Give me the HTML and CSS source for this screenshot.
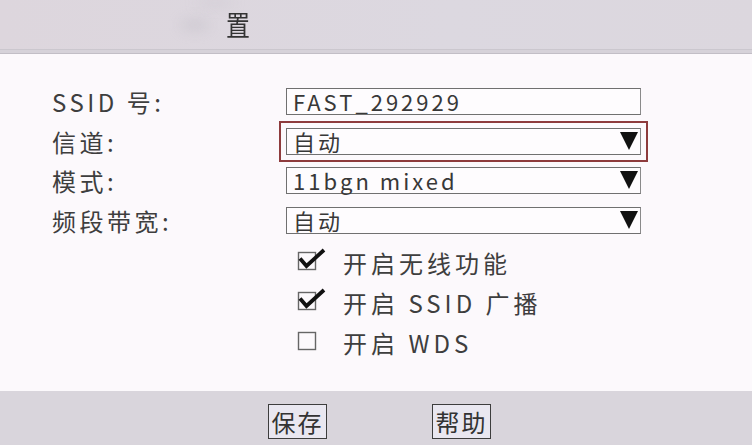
FILE: index.html
```html
<!DOCTYPE html>
<html lang="zh-CN">
<head>
<meta charset="utf-8">
<title>无线设置</title>
<link rel="stylesheet" href="styles.css">
</head>
<body>
<header class="topbar">
  <span class="blur blur-a"></span>
  <span class="blur blur-b"></span>
  <span class="title">置</span>
</header>
<main class="panel">
  <div class="fields">
    <label class="label">SSID 号:</label>
    <div class="field input">FAST_292929</div>

    <label class="label">信道:</label>
    <div class="field select highlighted">自动<span class="arrow"></span></div>

    <label class="label">模式:</label>
    <div class="field select">11bgn mixed<span class="arrow"></span></div>

    <label class="label">频段带宽:</label>
    <div class="field select">自动<span class="arrow"></span></div>
  </div>
  <ul class="checks">
    <li class="check">
      <svg class="cb" width="30" height="24" viewBox="0 0 30 24"><rect x="1.5" y="4.5" width="17" height="17" fill="none" stroke="#666" stroke-width="1.4"/><path d="M3 10.5 L9.5 18 L27 2" fill="none" stroke="#111" stroke-width="3.8" stroke-linejoin="miter"/></svg>
      <span>开启无线功能</span>
    </li>
    <li class="check">
      <svg class="cb" width="30" height="24" viewBox="0 0 30 24"><rect x="1.5" y="4.5" width="17" height="17" fill="none" stroke="#666" stroke-width="1.4"/><path d="M3 10.5 L9.5 18 L27 2" fill="none" stroke="#111" stroke-width="3.8" stroke-linejoin="miter"/></svg>
      <span>开启 SSID 广播</span>
    </li>
    <li class="check">
      <svg class="cb" width="30" height="24" viewBox="0 0 30 24"><rect x="1.5" y="4.5" width="17" height="17" fill="none" stroke="#666" stroke-width="1.4"/></svg>
      <span>开启 WDS</span>
    </li>
  </ul>
</main>
<footer class="bottombar">
  <button class="btn">保存</button>
  <button class="btn">帮助</button>
</footer>
</body>
</html>
```

FILE: styles.css
```css
html, body {
  margin: 0;
  padding: 0;
}
body {
  width: 752px;
  height: 445px;
  overflow: hidden;
  background: #fcf9fc;
  font-family: "Noto Sans CJK SC", "Noto Sans", sans-serif;
  color: #3e3e3e;
  display: flex;
  flex-direction: column;
}
.topbar {
  position: relative;
  height: 49px;
  flex: 0 0 auto;
  background: linear-gradient(90deg, #ddd6dd 0%, #dcd8e0 60%, #dcd7de 100%);
  border-bottom: 5px solid #d6d2d9;
  display: flex;
  align-items: flex-start;
  padding-left: 226px;
  box-sizing: content-box;
}
.topbar::after {
  content: "";
  position: absolute;
  left: 0;
  right: 0;
  bottom: -5px;
  height: 1px;
  background: #c2bec6;
}
.topbar::before {
  content: "";
  position: absolute;
  left: 0;
  right: 0;
  bottom: -1px;
  height: 1px;
  background: #cbc7ce;
}
.title {
  font-size: 24px;
  line-height: 24px;
  margin-top: 10px;
  color: #333;
  transform: scaleY(1.2);
  transform-origin: top;
}
.blur {
  position: absolute;
  border-radius: 50%;
  filter: blur(6px);
  background: rgba(190, 186, 196, 0.35);
}
.blur-a { left: 180px; top: 18px; width: 30px; height: 14px; }
.blur-b { left: 195px; top: 0; width: 40px; height: 6px; }

.panel {
  flex: 1 1 auto;
  padding: 34px 0 0 52px;
  box-sizing: border-box;
}
.fields {
  display: grid;
  grid-template-columns: 234px 355px;
  grid-auto-rows: 27px;
  row-gap: 12.7px;
  align-items: center;
}
.label {
  font-size: 24px;
  line-height: 27px;
  letter-spacing: 3.5px;
  white-space: nowrap;
}
.field {
  position: relative;
  height: 27px;
  box-sizing: border-box;
  border: 1.5px solid #707070;
  border-right-color: #8a8a8a;
  background: #fefcfe;
  font-size: 22px;
  line-height: 24px;
  letter-spacing: 3px;
  padding-left: 6px;
  color: #383838;
}
.highlighted {
  outline: 2px solid #8e3b3d;
  outline-offset: 5px;
}
.arrow {
  position: absolute;
  right: 2px;
  top: 3px;
  width: 0;
  height: 0;
  border-left: 9px solid transparent;
  border-right: 9px solid transparent;
  border-top: 18px solid #111;
}
.checks {
  list-style: none;
  margin: 8px 0 0 245px;
  padding: 0;
}
.check {
  height: 40px;
  display: flex;
  align-items: center;
  font-size: 24px;
  letter-spacing: 4px;
}
.cb {
  display: block;
  margin-top: -4px;
  margin-right: 16px;
  flex: 0 0 auto;
}
.bottombar {
  height: 54px;
  flex: 0 0 auto;
  background: #d9d5dc;
  display: flex;
  justify-content: center;
  align-items: flex-start;
  gap: 105px;
  padding-top: 13px;
  padding-left: 6px;
  box-sizing: border-box;
}
.btn {
  height: 35px;
  padding: 0 2px 0 3px;
  margin: 0;
  border: 1.5px solid #3d3d3d;
  background: #e9e7f0;
  font-family: "Noto Sans CJK SC", "Noto Sans", sans-serif;
  font-size: 24px;
  line-height: 31px;
  letter-spacing: 2px;
  color: #333;
}
```
